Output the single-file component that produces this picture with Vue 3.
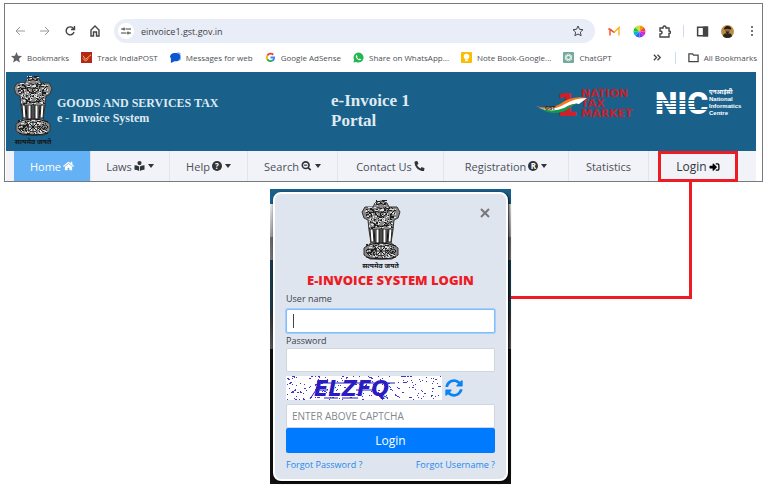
<template>
    <main class="page">
        <svg class="defs" aria-hidden="true">
            <symbol id="emblem" viewBox="0 0 40 60">
                <path class="stone" d="M14 3Q20-1 26 3L28 7L36 7L39 12L37 18L33 20L32 30L30 43L37 48L37 55L31 59L9 59L3 55L3 48L10 43L8 30L7 20L3 18L1 12L4 7L12 7Z"/>
                <rect v-for="(s, i) in emblemDots" :key="i" :x="s.x" :y="s.y" :width="s.w" height="1" :fill="s.dark ? '#222' : '#ddd'"/>
                <path class="ink" d="M12 9Q15 17 20 17Q25 17 28 9M15 5Q20 2 25 5M16 8h3M22 8h3M17 12h6M7 11l4 4l-4 3M33 11l-4 4l4 3M9 21Q20 32 31 21"/>
                <path class="leg" d="M9 29h3l1 13h-3zM15 29h3v14h-3zM22 29h3v14h-3zM28 29h3l-1 13h-3z"/>
                <path class="ink" d="M13 29l1 14M19 28v15M21 28v15M27 29l-1 14M5 46Q20 40 35 46M5 57Q20 61 35 57"/>
                <circle class="wheel" cx="20" cy="51" r="5"/>
                <path class="ink" d="M20 46v10M15 51h10M17 48l6 6M23 48l-6 6M5 51q3-4 6 0q-2 4-6 1M29 51q3-4 6 0q-2 4-6 1"/>
            </symbol>
        </svg>

        <section class="browser">
            <div class="toolbar">
                <button class="tool faint" aria-label="Back"><svg viewBox="0 0 12 12"><path d="M11 6H2M6 2L2 6l4 4"/></svg></button>
                <button class="tool faint" aria-label="Forward"><svg viewBox="0 0 12 12"><path d="M1 6h9M6 2l4 4l-4 4"/></svg></button>
                <button class="tool" aria-label="Reload"><svg viewBox="0 0 12 12"><path d="M10 7A4 4 0 1 1 9 3L10 4M10.500 1v3.500H7"/></svg></button>
                <button class="tool" aria-label="Home page"><svg viewBox="0 0 12 12"><path d="M2 11V5l4-4l4 4v6H7.500V7h-3v4z"/></svg></button>
                <div class="address">
                    <span class="site"><svg viewBox="0 0 12 12"><path d="M1 4h2M6 4h5M1 8h5M9 8h2"/><circle cx="4" cy="4" r="1"/><circle cx="8" cy="8" r="1"/></svg></span>
                    <input class="url" type="text" value="einvoice1.gst.gov.in" aria-label="Address">
                    <svg class="fav" viewBox="0 0 12 12"><path d="M6 1l1.500 3.300l3.500.4l-2.600 2.400l.7 3.600L6 9l-3.100 1.700l.7-3.600L1 4.700l3.500-.4z"/></svg>
                </div>
                <div class="extensions">
                    <svg viewBox="0 0 13 12"><path d="M2 10V4L6 7" stroke="#f4511e" fill="none" stroke-width="1.400"/><path d="M6 7L11 2v8" stroke="#fbb21a" fill="none" stroke-width="1.400"/><path d="M0 3.500h2.500L6 7" stroke="#ea4335" fill="none"/></svg>
                    <svg viewBox="0 0 12 12"><path v-for="(c, i) in wheel" :key="c" :fill="c" :transform="`rotate(${i * 45} 6 6)`" d="M6 6V0.500A5.500 5.500 0 0 1 9.900 2.100z"/></svg>
                    <svg class="line" viewBox="0 0 13 13"><path d="M2 3h3q0-2 1.500-2T8 3h3v3q1.500 0 1.500 1.200T11 8.500V12H2V9q2 0 2-1.500T2 6z"/></svg>
                    <i class="rule"></i>
                    <svg class="line" viewBox="0 0 12 12"><path d="M1.500 2h9v8h-9z"/><path d="M7 2h3.500v8H7z" fill="#444"/></svg>
                    <svg class="avatar" viewBox="0 0 14 14"><circle cx="7" cy="7" r="7" fill="#bb8d45"/><path d="M2 12Q3 8 7 9Q11 8 12 12Q7 16 2 12z" fill="#29251f"/><path d="M4 4Q7 0 10 4L9 8L7 10L5 8z" fill="#996b40"/><path d="M3 5Q4 1 7 1Q11 1 11 5Q7 3 3 5zM5 7h4l-2 3z" fill="#241b15"/></svg>
                    <button class="tool" aria-label="Menu"><svg viewBox="0 0 12 12"><g fill="#444" stroke="none"><circle cx="6" cy="2" r="1"/><circle cx="6" cy="6" r="1"/><circle cx="6" cy="10" r="1"/></g></svg></button>
                </div>
            </div>

            <div class="bookmarks">
                <a href="#"><svg viewBox="0 0 12 12"><path fill="#5f6368" d="M6 0l1.700 4l4.300.4L8.700 7.300l1 4.200L6 9.200l-3.700 2.300l1-4.200L0 4.400L4.300 4z"/></svg>Bookmarks</a>
                <a href="#"><svg viewBox="0 0 12 12"><path fill="#b3261e" d="M0 0h12v12H0z"/><path d="M2 4l3 4l6-5M2 7l3 3l3-3" fill="none" stroke="#ffc64b"/></svg>Track IndiaPOST</a>
                <a href="#"><svg viewBox="0 0 12 12"><path fill="#0b57d0" d="M5 1h2a4 4 0 0 1 0 9H5L1 12V7A5 5 0 0 1 0 5a5 5 0 0 1 5-4z"/><path d="M8 1a4 4 0 0 1 1 8" fill="none" stroke="#5d9bff"/></svg>Messages for web</a>
                <a href="#"><svg viewBox="0 0 12 12" fill="none" stroke-width="2"><path d="M2.500 4A4 4 0 0 1 9 3" stroke="#ea4335"/><path d="M2.500 4a4 4 0 0 0 0 4" stroke="#fbbc04"/><path d="M2.500 8A4 4 0 0 0 8.500 9" stroke="#34a853"/><path d="M6 6h4q0 2-1.500 3.300" stroke="#4285f4"/></svg>Google AdSense</a>
                <a href="#"><svg viewBox="0 0 12 12"><path fill="#20b94d" d="M6 .5a5.500 5.500 0 1 1-2.500 10.400L.5 11.500l.7-3A5.500 5.500 0 0 1 6 .5z"/><path fill="#fff" d="M4 3l1 2l-.6.8q.8 1.400 2 2l.8-.8l2 1Q8 9.500 6.500 9Q4 8 3 5.500Q2.800 4 4 3z"/></svg>Share on WhatsApp...</a>
                <a href="#"><svg viewBox="0 0 12 12"><rect width="12" height="12" rx="1" fill="#fbbc04"/><circle cx="6" cy="5" r="3" fill="#fff"/><path fill="#fff" d="M4.500 8h3v2h-3z"/></svg>Note Book-Google...</a>
                <a href="#"><svg viewBox="0 0 12 12"><rect width="12" height="12" rx="1" fill="#74aa9c"/><g fill="none" stroke="#fff" stroke-width=".7"><ellipse cx="6" cy="6" rx="2" ry="4"/><ellipse cx="6" cy="6" rx="2" ry="4" transform="rotate(60 6 6)"/><ellipse cx="6" cy="6" rx="2" ry="4" transform="rotate(120 6 6)"/></g></svg>ChatGPT</a>
                <div class="all">
                    <svg class="line" viewBox="0 0 12 12"><path d="M2 3l3 3l-3 3M6 3l3 3l-3 3"/></svg>
                    <i class="rule"></i>
                    <a href="#"><svg class="line" viewBox="0 0 12 12"><path d="M1 2h4l1 1.500h5V10.500H1z"/></svg>All Bookmarks</a>
                </div>
            </div>

            <header class="banner">
                <div class="brand">
                    <div class="crest">
                        <svg><use href="#emblem"/></svg>
                        <span>सत्यमेव जयते</span>
                    </div>
                    <p>GOODS AND SERVICES TAX<br>e - Invoice System</p>
                </div>
                <h1>e-Invoice 1<br>Portal</h1>
                <svg class="market" viewBox="0 0 112 28" role="img" aria-label="Nation Tax Market">
                    <text class="one" x="20" y="26">1</text>
                    <text class="words"><tspan x="45" y="7">NATION</tspan><tspan x="45" y="17">TAX</tspan><tspan x="45" y="27">MARKET</tspan></text>
                    <path fill="#f47b20" d="M0 16Q14 20 24 14Q36 5 51 8Q39 10 30 15Q16 24 0 16z"/>
                    <path fill="#fff" d="M3 18Q18 21 29 14Q39 8 51 8L43 14Q36 13 29 18Q16 24 3 18z"/>
                    <path fill="#149b48" d="M5 19Q20 23 32 16L42 13Q33 18 29 21Q16 26 5 19z"/>
                    <text class="gst" x="9" y="20">GST</text>
                </svg>
                <div class="nic">
                    <svg viewBox="0 0 52 26" role="img" aria-label="NIC">
                        <text x="-1" y="25">NIC</text>
                        <path d="M0 11.500h54M0 14.500h54M0 17.500h54M0 20.500h54"/>
                    </svg>
                    <span>एनआईसी<br>National<br>Informatics<br>Centre</span>
                </div>
            </header>

            <nav class="menu">
                <a href="#" class="active">Home <svg viewBox="0 0 576 512"><path d="M280.370 148.260L96 300.110V464a16 16 0 0 0 16 16l112.060-.29a16 16 0 0 0 15.920-16V368a16 16 0 0 1 16-16h64a16 16 0 0 1 16 16v95.640a16 16 0 0 0 16 16.050L464 480a16 16 0 0 0 16-16V300L295.670 148.260a12.190 12.190 0 0 0-15.300 0zM571.600 251.470L488 182.560V44a12 12 0 0 0-12-12h-56a12 12 0 0 0-12 12v72.600L318.470 43a48 48 0 0 0-61 0L4.340 251.470a12 12 0 0 0-1.600 16.900l25.500 31A12 12 0 0 0 45.150 301l235.220-193.740a12.190 12.190 0 0 1 15.300 0L530.900 301a12 12 0 0 0 16.900-1.600l25.500-31a12 12 0 0 0-1.700-16.930z"/></svg></a>
                <a href="#">Laws <svg viewBox="0 0 12 12"><circle cx="6" cy="2.500" r="2.500"/><path d="M0 5q3 0 5.500 1.500V12Q3 10.500 0 10.500zM12 5Q9 5 6.500 6.500V12Q9 10.500 12 10.500z"/></svg><b class="caret"></b></a>
                <a href="#">Help <i class="disc">?</i><b class="caret"></b></a>
                <a href="#">Search <svg viewBox="0 0 12 12"><path class="stroke" d="M8 8l3 3"/><circle class="stroke" cx="5" cy="5" r="4"/><path d="M3 4.300h4v1.400H3z"/></svg><b class="caret"></b></a>
                <a href="#">Contact Us <svg class="flip" viewBox="0 0 512 512"><path d="M493.400 24.600l-104-24c-11.300-2.600-22.900 3.300-27.500 13.900l-48 112c-4.200 9.800-1.400 21.300 6.900 28l60.600 49.600c-36 76.700-98.900 140.500-177.200 177.200l-49.600-60.600c-6.800-8.300-18.200-11.100-28-6.900l-112 48C3.900 366.500-2 378.100.6 389.400l24 104C27.100 504.200 36.700 512 48 512c256.100 0 464-207.500 464-464 0-11.200-7.700-20.900-18.600-23.400z"/></svg></a>
                <a href="#">Registration <i class="disc">R</i><b class="caret"></b></a>
                <a href="#">Statistics</a>
                <a href="#" class="login">Login <svg viewBox="0 0 512 512"><path d="M416 448h-84c-6.600 0-12-5.400-12-12v-40c0-6.600 5.400-12 12-12h84c17.700 0 32-14.300 32-32V160c0-17.700-14.300-32-32-32h-84c-6.600 0-12-5.400-12-12V76c0-6.600 5.400-12 12-12h84c53 0 96 43 96 96v192c0 53-43 96-96 96zm-47-201L201 79c-15-15-41-4.500-41 17v96H24c-13.300 0-24 10.700-24 24v96c0 13.300 10.700 24 24 24h136v96c0 21.500 26 32 41 17l168-168c9.300-9.400 9.300-24.600 0-34z"/></svg></a>
            </nav>
        </section>

        <section class="lower">
            <div class="backdrop">
                <form class="dialog" @submit.prevent>
                    <button type="button" class="close" aria-label="Close"><svg viewBox="0 0 10 10"><path d="M1 1l8 8M9 1l-8 8"/></svg></button>
                    <div class="crest">
                        <svg><use href="#emblem"/></svg>
                        <span>सत्यमेव जयते</span>
                    </div>
                    <h2>E-INVOICE SYSTEM LOGIN</h2>
                    <label for="user">User name</label>
                    <div class="field focused">
                        <i class="cursor"></i>
                        <input id="user" v-model="user" type="text">
                    </div>
                    <label for="pass">Password</label>
                    <div class="field"><input id="pass" v-model="pass" type="password"></div>
                    <div class="captcha">
                        <svg class="code" viewBox="0 0 156 24">
                            <rect v-for="(d, i) in captchaDots" :key="i" :x="d.x" :y="d.y" :width="d.w" height="1"/>
                            <text x="28" y="20">ELZFQ</text>
                            <path d="M24 23l6-9M38 22h14M56 22h16M30 14h12M70 14h18M92 17l10 5M33 7h76"/>
                        </svg>
                        <button type="button" class="refresh" aria-label="Refresh captcha"><svg viewBox="0 0 512 512"><path d="M370.720 133.280C339.458 104.008 298.888 87.962 255.848 88c-77.458.068-144.328 53.178-162.791 126.850-1.344 5.363-6.122 9.150-11.651 9.150H24.103c-7.498 0-13.194-6.807-11.807-14.176C33.933 94.924 134.813 8 256 8c66.448 0 126.791 26.136 171.315 68.685L463.030 40.970C478.149 25.851 504 36.559 504 57.941V192c0 13.255-10.745 24-24 24H345.941c-21.382 0-32.090-25.851-16.971-40.971l41.750-41.749zM32 296h134.059c21.382 0 32.090 25.851 16.971 40.971l-41.750 41.750c31.262 29.273 71.835 45.319 114.876 45.280 77.418-.07 144.315-53.144 162.787-126.849 1.344-5.363 6.122-9.150 11.651-9.150h57.304c7.498 0 13.194 6.807 11.807 14.176C478.067 417.076 377.187 504 256 504c-66.448 0-126.791-26.136-171.315-68.685L48.970 471.030C33.851 486.149 8 475.441 8 454.059V320c0-13.255 10.745-24 24-24z"/></svg></button>
                    </div>
                    <div class="field"><input v-model="code" type="text" placeholder="ENTER ABOVE CAPTCHA" aria-label="Captcha"></div>
                    <button class="submit">Login</button>
                    <div class="links">
                        <a href="#">Forgot Password ?</a>
                        <a href="#">Forgot Username ?</a>
                    </div>
                </form>
            </div>
            <div class="connector"></div>
        </section>
    </main>
</template>

<script setup>
import {ref} from 'vue';

const user = ref('');
const pass = ref('');
const code = ref('');

const wheel = ['#ff9800', '#f44336', '#e91ec8', '#7a3cff', '#2962ff', '#00b8d4', '#22c32e', '#cddc39'];

// fixed seed so the speckles are the same on every load
function scatter(count, width, height, seed) {
    let n = seed;
    const next = () => {
        n = (n * 16807) % 2147483647;
        return n / 2147483647;
    };
    return Array.from({length: count}, () => ({
        x: Math.floor(next() * width),
        y: Math.floor(next() * height),
        w: next() > 0.7 ? 2 : 1,
        dark: next() > 0.5
    }));
}

// keep the dots inside the outline of the lions and the base
function insideEmblem({x, y}) {
    if (y < 7) return x > 13 && x < 25;
    if (y < 18) return x > 3 && x < 35;
    if (y < 29) return x > 7 && x < 31;
    if (y < 44) return false;
    return x > 4 && x < 34;
}

const emblemDots = scatter(1100, 40, 58, 71).filter(insideEmblem);
const captchaDots = scatter(210, 155, 24, 913);
</script>

<style>
body {
    margin: 0;
    background: #fff;
}
</style>

<style scoped>
* {
    box-sizing: border-box;
}

.page {
    padding: 3px 5px 4px 4px;
    font-family: "Open Sans", "Noto Sans", sans-serif;
    color: #4c5056;
}

.defs {
    display: none;
}

a {
    color: inherit;
    text-decoration: none;
}

button {
    padding: 0;
    border: 0;
    background: none;
    font-family: inherit;
    cursor: pointer;
}

svg {
    display: block;
    flex: none;
}

.browser {
    border: 1px solid #77797c;
    background: #fff;
}

.toolbar {
    display: flex;
    align-items: center;
    gap: 13px;
    padding: 15px 4px 0 9px;
}

.tool svg,
.line {
    width: 12px;
    height: 12px;
    fill: none;
    stroke: #444;
    stroke-width: 1.400;
}

.faint svg {
    stroke: #999;
    stroke-width: 1;
}

.address {
    display: flex;
    flex: 1;
    align-items: center;
    gap: 7px;
    height: 24px;
    padding: 0 11px 0 4px;
    border-radius: 12px;
    background: #e9edf7;
}

.site {
    padding: 2px;
    border-radius: 8px;
    background: #fff;
}

.site svg,
.fav {
    width: 12px;
    height: 12px;
    fill: none;
    stroke: #444;
}

.url {
    flex: 1;
    min-width: 0;
    padding: 0;
    border: 0;
    outline: 0;
    background: none;
    color: #3c4043;
    font-family: inherit;
    font-size: 9px;
}

.extensions {
    display: flex;
    align-items: center;
    gap: 12px;
}

.extensions > svg {
    width: 13px;
    height: 13px;
}

.rule {
    width: 1px;
    height: 12px;
    background: #c9dcf6;
}

.bookmarks {
    display: flex;
    align-items: center;
    gap: 12px;
    height: 29px;
    padding: 0 5px 0 6px;
    font-size: 8px;
    white-space: nowrap;
}

.bookmarks a {
    display: flex;
    align-items: center;
    gap: 5px;
}

.bookmarks svg {
    width: 11px;
    height: 11px;
}

.all {
    display: flex;
    align-items: center;
    gap: 12px;
    margin-left: auto;
}

.banner {
    display: grid;
    grid-template-columns: 325fr 205fr 120fr 100fr;
    height: 79px;
    margin: 0 6px 0 1px;
    background: #19608b;
    color: #dfeaf1;
    font-family: "Liberation Serif", serif;
    font-weight: bold;
}

.brand {
    display: flex;
    gap: 4px;
    padding: 4px 0 0 7px;
    font-size: 12px;
    line-height: 15px;
}

.brand p {
    margin: 20px 0 0;
}

.crest {
    display: flex;
    flex-direction: column;
    align-items: center;
    width: 40px;
    color: #151515;
    font-family: "Noto Sans", sans-serif;
    font-size: 7px;
    font-weight: bold;
    line-height: 12px;
    white-space: nowrap;
}

.crest svg {
    width: 40px;
    height: 60px;
}

.stone {
    fill: #888;
    stroke: #333;
}

.ink {
    fill: none;
    stroke: #111;
}

.leg {
    fill: #fff;
    stroke: #222;
}

.wheel {
    fill: #ddd;
    stroke: #111;
}

.banner h1 {
    margin: 19px 0 0;
    font-size: 17px;
    line-height: 20px;
}

.market {
    width: 112px;
    height: 28px;
    margin-top: 18px;
    overflow: visible;
}

.words {
    fill: #c4222b;
    font: bold 11px "DejaVu Sans", sans-serif;
}

.one {
    fill: #cf1f2a;
    font: bold 32px "DejaVu Sans", sans-serif;
}

.gst {
    fill: #222;
    font: bold 5px "Liberation Sans", sans-serif;
}

.nic {
    display: flex;
    gap: 1px;
    margin-top: 17px;
    color: #fff;
    font-family: "Liberation Sans", "Noto Sans", sans-serif;
    font-size: 6px;
    line-height: 7px;
}

.nic svg {
    width: 52px;
    height: 26px;
    overflow: visible;
}

.nic text {
    fill: #fff;
    font: 900 32px Roboto, sans-serif;
}

.nic path {
    stroke: #19608b;
}

.menu {
    display: grid;
    grid-template-columns: 77fr 79fr 78fr 90fr 106fr 125fr 80fr 98fr;
    height: 30px;
    margin: 0 6px 0 1px;
    padding: 0 9px 0 8px;
    background: #f1f3f9;
    font-size: 11px;
}

.menu a {
    display: flex;
    align-items: center;
    justify-content: center;
    gap: 2px;
    border-right: 1px solid #e1e4ea;
    white-space: nowrap;
}

.menu svg {
    width: 11px;
    height: 10px;
    fill: #303338;
}

.menu .stroke {
    fill: none;
    stroke: #303338;
    stroke-width: 2;
}

.menu .flip {
    transform: scaleX(-1);
}

.menu .active {
    background: #65b1f5;
    color: #fff;
}

.menu .active svg {
    fill: #fff;
}

.menu .login {
    margin: 0 9px -1px;
    border: 3px solid #ed1c24;
    color: #33363a;
    font-size: 12px;
}

.menu .login svg {
    fill: #000;
}

.disc {
    width: 10px;
    height: 10px;
    border-radius: 5px;
    background: #303338;
    color: #fff;
    font-size: 8px;
    font-style: normal;
    font-weight: bold;
    line-height: 10px;
    text-align: center;
}

.caret {
    margin-left: 1px;
    border: 3px solid transparent;
    border-top: 4px solid #303338;
    border-bottom: 0;
}

.lower {
    display: flex;
    align-items: flex-start;
    padding: 0 71px 0 266px;
}

.backdrop {
    width: 241px;
    margin-top: 7px;
    padding: 3px;
    background: linear-gradient(#19608b 15px, #e8e8e8 15px, #999 48px, #666 48px, #777 71px, #153c50 71px, #203a48 126px, #333 126px, #555 160px, #111 160px);
}

.dialog {
    position: relative;
    display: flex;
    flex-direction: column;
    padding: 6px 11px 7px;
    border: 2px solid #fff;
    border-radius: 8px;
    background: #dee5ef;
    box-shadow: 1px 1px 3px #000;
    font-size: 9px;
}

.close {
    position: absolute;
    top: 14px;
    right: 16px;
}

.close svg {
    width: 10px;
    height: 10px;
    stroke: #777;
    stroke-width: 2;
}

.dialog .crest {
    align-self: center;
    margin-right: 20px;
}

h2 {
    align-self: center;
    margin: 0 0 4px;
    color: #ed1c24;
    font-size: 13px;
    font-weight: 800;
    line-height: 16px;
    white-space: nowrap;
}

label {
    color: #3c4148;
    line-height: 14px;
}

.field {
    display: flex;
    align-items: center;
    height: 24px;
    border: 1px solid #d0d6df;
    border-radius: 2px;
    background: #fff;
}

.focused {
    margin: 3px 0 1px;
    border-color: #80bdff;
    box-shadow: 0 0 0 1px #a5cffb;
}

.cursor {
    width: 1px;
    height: 14px;
    margin-left: 6px;
    background: #444;
}

.field input {
    width: 100%;
    min-width: 0;
    padding: 0 5px;
    border: 0;
    outline: 0;
    background: none;
    font-family: inherit;
    font-size: 10px;
}

.field input::placeholder {
    color: #81878d;
    opacity: 1;
}

.captcha {
    display: flex;
    align-items: center;
    gap: 3px;
    padding: 4px 0;
}

.code {
    width: 156px;
    height: 24px;
    background: #fff;
    fill: #4a35c8;
    overflow: visible;
}

.code text {
    fill: #2a1cc0;
    font: italic bold 21px "DejaVu Sans", sans-serif;
}

.code path {
    fill: none;
    stroke: #2a1cc0;
}

.refresh svg {
    width: 18px;
    height: 18px;
    fill: #0a84f5;
}

.submit {
    height: 25px;
    border-radius: 2px;
    background: #007bff;
    color: #fff;
    font-size: 12px;
}

.links {
    display: flex;
    justify-content: space-between;
    padding-top: 5px;
    color: #1e87f0;
    line-height: 14px;
}

.connector {
    flex: 1;
    height: 117px;
    border: solid #ed1c24;
    border-width: 0 3px 3px 0;
}
</style>
